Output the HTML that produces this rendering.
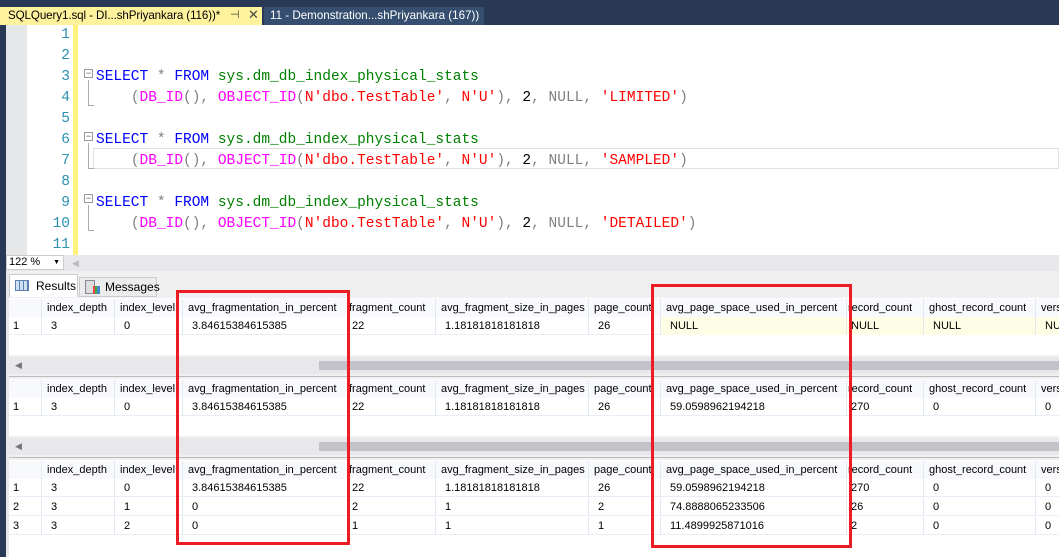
<!DOCTYPE html>
<html><head><meta charset="utf-8"><style>
*{margin:0;padding:0;box-sizing:border-box}
body{width:1059px;height:557px;overflow:hidden;background:#f0f0f0;font-family:"Liberation Sans",sans-serif;position:relative}
.a{position:absolute}
.code{font-family:"Liberation Mono",monospace;font-size:14.5px;white-space:pre;line-height:21px}
.kw{color:#0000ff}.gr{color:#808080}.fn{color:#ff00ff}.st{color:#ff0000}.sy{color:#008000}
.ln{color:#2b91af;text-align:right;width:30px;left:40px;font-family:"Liberation Mono",monospace;font-size:14.5px}
.grid{position:absolute;left:9px;right:0;background:#fff;font-size:11px;color:#000}
.row{position:absolute;left:0;right:0;height:18px;border-bottom:1px solid #e8eef7}
.c{position:absolute;top:0;height:18px;line-height:18px;padding-left:9px;border-right:1px solid #e3e9f3;white-space:nowrap;overflow:hidden}
.hd .c{background:#f7f9fd;padding-left:5px}
.sb{position:absolute;left:9px;right:0;height:17px;background:#e8e8ec}
.red{position:absolute;border:3px solid #ed1c24}
</style></head><body>
<div class="a" style="left:0;top:0;width:6px;height:557px;background:#293955"></div>
<div class="a" style="left:6px;top:0;right:0;height:25px;background:#293955"></div>
<div class="a" style="left:0;top:7px;width:262px;height:18px;background:#fff29d;font-size:11.6px;line-height:18px;padding-left:8px;color:#000;white-space:nowrap;letter-spacing:-0.1px">SQLQuery1.sql - DI...shPriyankara (116))*</div>
<div class="a" style="left:230px;top:8px;font-size:11px;color:#444">⊣</div>
<div class="a" style="left:248px;top:7px;font-size:13px;color:#444">✕</div>
<div class="a" style="left:264px;top:7px;width:220px;height:18px;background:#364e6f;font-size:11.6px;line-height:18px;padding-left:6px;color:#fff;white-space:nowrap">11 - Demonstration...shPriyankara (167))</div>
<div class="a" style="left:6px;top:25px;right:0;height:230px;background:#fff"></div>
<div class="a" style="left:6px;top:25px;width:21px;height:230px;background:#e6e7e8"></div>
<div class="a" style="left:73px;top:25px;width:5px;height:230px;background:#fff37e"></div>
<div class="a" style="left:93px;top:148px;right:0;height:21px;border:1px solid #e0e0e0"></div>
<div class="a ln code" style="top:25px">1
2
3
4
5
6
7
8
9
10
11</div>
<div class="a code" style="left:96px;top:25px">

<span class="kw">SELECT</span> <span class="gr">*</span> <span class="kw">FROM</span> <span class="sy">sys.dm_db_index_physical_stats</span>
    <span class="gr">(</span><span class="fn">DB_ID</span><span class="gr">(),</span> <span class="fn">OBJECT_ID</span><span class="gr">(</span><span class="st">N'dbo.TestTable'</span><span class="gr">,</span> <span class="st">N'U'</span><span class="gr">),</span> 2<span class="gr">,</span> <span class="gr">NULL,</span> <span class="st">'LIMITED'</span><span class="gr">)</span>

<span class="kw">SELECT</span> <span class="gr">*</span> <span class="kw">FROM</span> <span class="sy">sys.dm_db_index_physical_stats</span>
    <span class="gr">(</span><span class="fn">DB_ID</span><span class="gr">(),</span> <span class="fn">OBJECT_ID</span><span class="gr">(</span><span class="st">N'dbo.TestTable'</span><span class="gr">,</span> <span class="st">N'U'</span><span class="gr">),</span> 2<span class="gr">,</span> <span class="gr">NULL,</span> <span class="st">'SAMPLED'</span><span class="gr">)</span>

<span class="kw">SELECT</span> <span class="gr">*</span> <span class="kw">FROM</span> <span class="sy">sys.dm_db_index_physical_stats</span>
    <span class="gr">(</span><span class="fn">DB_ID</span><span class="gr">(),</span> <span class="fn">OBJECT_ID</span><span class="gr">(</span><span class="st">N'dbo.TestTable'</span><span class="gr">,</span> <span class="st">N'U'</span><span class="gr">),</span> 2<span class="gr">,</span> <span class="gr">NULL,</span> <span class="st">'DETAILED'</span><span class="gr">)</span>
</div>
<div class="a" style="left:84px;top:69px;width:9px;height:9px;border:1px solid #999;font-size:9px;line-height:6px;text-align:center;color:#555">−</div>
<div class="a" style="left:84px;top:132px;width:9px;height:9px;border:1px solid #999;font-size:9px;line-height:6px;text-align:center;color:#555">−</div>
<div class="a" style="left:84px;top:194px;width:9px;height:9px;border:1px solid #999;font-size:9px;line-height:6px;text-align:center;color:#555">−</div>
<div class="a" style="left:88px;top:80px;width:6px;height:26px;border-left:1px solid #aaa;border-bottom:1px solid #aaa"></div>
<div class="a" style="left:88px;top:143px;width:6px;height:26px;border-left:1px solid #aaa;border-bottom:1px solid #aaa"></div>
<div class="a" style="left:88px;top:205px;width:6px;height:26px;border-left:1px solid #aaa;border-bottom:1px solid #aaa"></div>
<div class="a" style="left:6px;top:255px;right:0;height:16px;background:#e8e8ec"></div>
<div class="a" style="left:6px;top:255px;width:58px;height:15px;background:#fff;border:1px solid #ccc;font-size:11px;line-height:13px;padding-left:2px">122 %<span style="position:absolute;right:3px;font-size:7px">▼</span></div>
<div class="a" style="left:72px;top:258px;font-size:9px;color:#bbb">◀</div>
<div class="a" style="left:6px;top:271px;width:3px;height:286px;background:#e8e8ec"></div>
<div class="a" style="left:9px;top:274px;width:69px;height:23px;background:#fff;border:1px solid #ccc;border-bottom:none;font-size:12px;line-height:22px;padding-left:26px">Results</div>
<div class="a" style="left:15px;top:280px;width:14px;height:11px;border:1px solid #5b7fae;background:repeating-linear-gradient(90deg,#cfe0f5 0 3px,#5b7fae 3px 4px)"></div>
<div class="a" style="left:79px;top:277px;width:78px;height:20px;background:#ececec;border:1px solid #ccc;font-size:12px;line-height:19px;padding-left:25px">Messages</div>
<div class="a" style="left:85px;top:280px;width:10px;height:14px;background:#ddd;border:1px solid #889"></div>
<div class="a" style="left:93px;top:286px;width:7px;height:8px;background:linear-gradient(90deg,#e44 0 2px,#4a4 2px 4px,#48c 4px)"></div>

<div class="grid" style="top:298px;height:57px">
<div class="row hd" style="top:1px"><div class="c" style="left:0;width:33px"></div><div class="c" style="left:33px;width:73px">index_depth</div><div class="c" style="left:106px;width:68px">index_level</div><div class="c" style="left:174px;width:165px">avg_fragmentation_in_percent</div><div class="c" style="left:339px;width:88px;padding-left:1px">fragment_count</div><div class="c" style="left:427px;width:153px">avg_fragment_size_in_pages</div><div class="c" style="left:580px;width:72px">page_count</div><div class="c" style="left:652px;width:186px">avg_page_space_used_in_percent</div><div class="c" style="left:838px;width:77px;padding-left:1px">record_count</div><div class="c" style="left:915px;width:112px">ghost_record_count</div><div class="c" style="left:1027px;width:40px">version</div></div>
<div class="row" style="top:19px"><div class="c" style="left:0;width:33px;padding-left:4px">1</div><div class="c" style="left:33px;width:73px">3</div><div class="c" style="left:106px;width:68px">0</div><div class="c" style="left:174px;width:165px">3.84615384615385</div><div class="c" style="left:339px;width:88px;padding-left:4px">22</div><div class="c" style="left:427px;width:153px">1.18181818181818</div><div class="c" style="left:580px;width:72px">26</div><div class="c" style="left:652px;width:186px;background:#fefee6">NULL</div><div class="c" style="left:838px;width:77px;background:#fefee6;padding-left:4px">NULL</div><div class="c" style="left:915px;width:112px;background:#fefee6">NULL</div><div class="c" style="left:1027px;width:40px;background:#fefee6">NULL</div></div>
</div>
<div class="sb" style="top:357px"><span style="position:absolute;left:6px;top:3px;font-size:9px;color:#777">◀</span><div class="a" style="left:310px;top:4px;right:0;height:9px;background:#c2c3c9"></div></div>
<div class="a" style="left:9px;top:376px;right:0;height:2px;border-top:1px solid #bbb"></div>

<div class="grid" style="top:379px;height:57px">
<div class="row hd" style="top:1px"><div class="c" style="left:0;width:33px"></div><div class="c" style="left:33px;width:73px">index_depth</div><div class="c" style="left:106px;width:68px">index_level</div><div class="c" style="left:174px;width:165px">avg_fragmentation_in_percent</div><div class="c" style="left:339px;width:88px;padding-left:1px">fragment_count</div><div class="c" style="left:427px;width:153px">avg_fragment_size_in_pages</div><div class="c" style="left:580px;width:72px">page_count</div><div class="c" style="left:652px;width:186px">avg_page_space_used_in_percent</div><div class="c" style="left:838px;width:77px;padding-left:1px">record_count</div><div class="c" style="left:915px;width:112px">ghost_record_count</div><div class="c" style="left:1027px;width:40px">version</div></div>
<div class="row" style="top:19px"><div class="c" style="left:0;width:33px;padding-left:4px">1</div><div class="c" style="left:33px;width:73px">3</div><div class="c" style="left:106px;width:68px">0</div><div class="c" style="left:174px;width:165px">3.84615384615385</div><div class="c" style="left:339px;width:88px;padding-left:4px">22</div><div class="c" style="left:427px;width:153px">1.18181818181818</div><div class="c" style="left:580px;width:72px">26</div><div class="c" style="left:652px;width:186px">59.0598962194218</div><div class="c" style="left:838px;width:77px;padding-left:4px">270</div><div class="c" style="left:915px;width:112px">0</div><div class="c" style="left:1027px;width:40px">0</div></div>
</div>
<div class="sb" style="top:438px"><span style="position:absolute;left:6px;top:3px;font-size:9px;color:#777">◀</span><div class="a" style="left:310px;top:4px;right:0;height:9px;background:#c2c3c9"></div></div>
<div class="a" style="left:9px;top:457px;right:0;height:2px;border-top:1px solid #bbb"></div>

<div class="grid" style="top:460px;height:97px">
<div class="row hd" style="top:1px"><div class="c" style="left:0;width:33px"></div><div class="c" style="left:33px;width:73px">index_depth</div><div class="c" style="left:106px;width:68px">index_level</div><div class="c" style="left:174px;width:165px">avg_fragmentation_in_percent</div><div class="c" style="left:339px;width:88px;padding-left:1px">fragment_count</div><div class="c" style="left:427px;width:153px">avg_fragment_size_in_pages</div><div class="c" style="left:580px;width:72px">page_count</div><div class="c" style="left:652px;width:186px">avg_page_space_used_in_percent</div><div class="c" style="left:838px;width:77px;padding-left:1px">record_count</div><div class="c" style="left:915px;width:112px">ghost_record_count</div><div class="c" style="left:1027px;width:40px">version</div></div>
<div class="row" style="top:19px"><div class="c" style="left:0;width:33px;padding-left:4px">1</div><div class="c" style="left:33px;width:73px">3</div><div class="c" style="left:106px;width:68px">0</div><div class="c" style="left:174px;width:165px">3.84615384615385</div><div class="c" style="left:339px;width:88px;padding-left:4px">22</div><div class="c" style="left:427px;width:153px">1.18181818181818</div><div class="c" style="left:580px;width:72px">26</div><div class="c" style="left:652px;width:186px">59.0598962194218</div><div class="c" style="left:838px;width:77px;padding-left:4px">270</div><div class="c" style="left:915px;width:112px">0</div><div class="c" style="left:1027px;width:40px">0</div></div>
<div class="row" style="top:38px"><div class="c" style="left:0;width:33px;padding-left:4px">2</div><div class="c" style="left:33px;width:73px">3</div><div class="c" style="left:106px;width:68px">1</div><div class="c" style="left:174px;width:165px">0</div><div class="c" style="left:339px;width:88px;padding-left:4px">2</div><div class="c" style="left:427px;width:153px">1</div><div class="c" style="left:580px;width:72px">2</div><div class="c" style="left:652px;width:186px">74.8888065233506</div><div class="c" style="left:838px;width:77px;padding-left:4px">26</div><div class="c" style="left:915px;width:112px">0</div><div class="c" style="left:1027px;width:40px">0</div></div>
<div class="row" style="top:57px"><div class="c" style="left:0;width:33px;padding-left:4px">3</div><div class="c" style="left:33px;width:73px">3</div><div class="c" style="left:106px;width:68px">2</div><div class="c" style="left:174px;width:165px">0</div><div class="c" style="left:339px;width:88px;padding-left:4px">1</div><div class="c" style="left:427px;width:153px">1</div><div class="c" style="left:580px;width:72px">1</div><div class="c" style="left:652px;width:186px">11.4899925871016</div><div class="c" style="left:838px;width:77px;padding-left:4px">2</div><div class="c" style="left:915px;width:112px">0</div><div class="c" style="left:1027px;width:40px">0</div></div>
</div>

<div class="red" style="left:176px;top:290px;width:174px;height:255px"></div>
<div class="red" style="left:651px;top:284px;width:201px;height:264px"></div>
</body></html>
